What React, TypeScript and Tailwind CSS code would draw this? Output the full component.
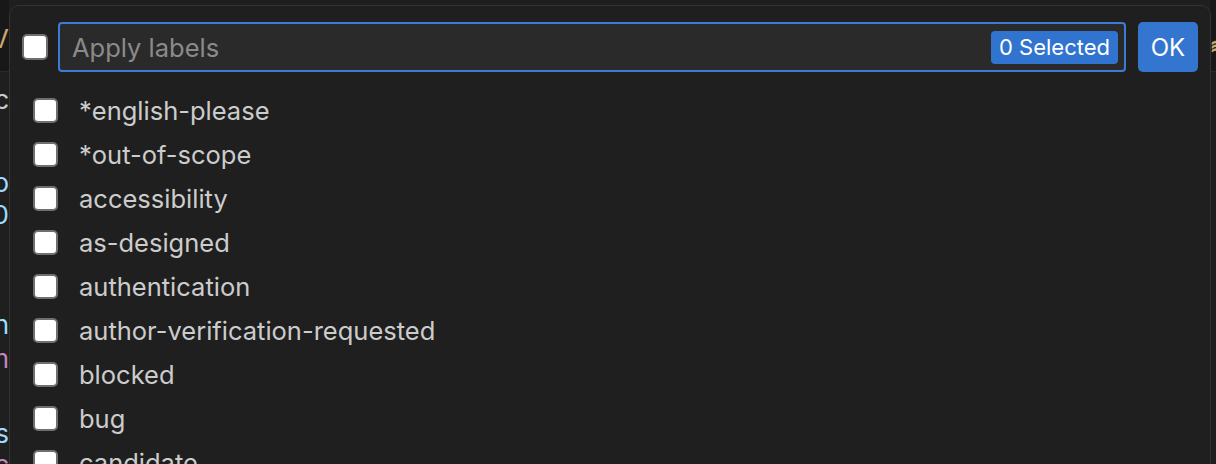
import React from "react";

const labels = [
  "*english-please",
  "*out-of-scope",
  "accessibility",
  "as-designed",
  "authentication",
  "author-verification-requested",
  "blocked",
  "bug",
  "candidate",
];

// bits of the editor peeking out on the left of the picker
const leftBits: { h: string; text: string; color: string }[] = [
  { h: "h-[24px]", text: "", color: "" },
  { h: "h-[30px]", text: "V", color: "text-[#c9a86a]" },
  { h: "h-[28px]", text: "", color: "" },
  { h: "h-[36px]", text: "ic", color: "text-[#cccccc]" },
  { h: "h-[49px]", text: "", color: "" },
  { h: "h-[32px]", text: "o", color: "text-[#9cdcfe]" },
  { h: "h-[32px]", text: "0", color: "text-[#9cdcfe]" },
  { h: "h-[77px]", text: "", color: "" },
  { h: "h-[34px]", text: "n", color: "text-[#9cdcfe]" },
  { h: "h-[34px]", text: "m", color: "text-[#c586c0]" },
  { h: "h-[42px]", text: "", color: "" },
  { h: "h-[32px]", text: "s", color: "text-[#9cdcfe]" },
  { h: "h-[30px]", text: "c", color: "text-[#c586c0]" },
];

function Box({ className = "" }: { className?: string }) {
  return (
    <span
      className={`block shrink-0 rounded-[5px] border-2 border-[#6f6f6f] bg-white ${className}`}
    />
  );
}

export default function App() {
  return (
    <div
      className="relative w-[1216px] h-[464px] overflow-hidden bg-[#1f1f1f]"
      style={{ fontFamily: "Inter, 'Noto Sans', sans-serif" }}
    >
      {/* editor behind */}
      <div className="flex h-full justify-between">
        <div className="w-[9px] flex flex-col overflow-hidden">
          <div className="h-[72px] bg-[#181818] border-b border-[#2b2b2b] shrink-0" />
        </div>
        <div className="w-[6px] flex flex-col">
          <div className="h-[72px] bg-[#181818] border-b border-[#2b2b2b] shrink-0 pt-[34px]">
            <span className="block text-[#c9a86a] text-[20px] leading-[24px] font-bold">≋</span>
          </div>
        </div>
      </div>
      <div className="absolute left-0 top-0 w-[9px] overflow-hidden flex flex-col items-end text-[26px] leading-none">
        {leftBits.map((b, i) => (
          <div key={i} className={`${b.h} flex items-center justify-end ${b.color}`}>
            <span className="whitespace-nowrap">{b.text}</span>
          </div>
        ))}
      </div>

      {/* quick pick */}
      <div className="absolute left-[9px] top-[5px] w-[1202px] h-[480px] rounded-[10px] border border-[#333333] bg-[#1f1f1f]">
        <div className="flex items-center pl-[12px] pr-[12px] pt-[16px]">
          <Box className="w-[26px] h-[26px]" />
          <div className="ml-[10px] flex-1 h-[50px] rounded-[4px] border-2 border-[#3b7dd6] bg-[#2a2a2a] flex items-center pl-[12px] pr-[6px]">
            <span className="flex-1 text-[25.5px] text-[#8a8a8a] pt-[2px]">Apply labels</span>
            <span className="h-[33px] px-[8px] rounded-[4px] bg-[#3074d0] text-white text-[22px] flex items-center">
              0 Selected
            </span>
          </div>
          <button className="ml-[12px] w-[60px] h-[50px] rounded-[5px] bg-[#3476cf] text-white text-[24px] pt-[2px]">
            OK
          </button>
        </div>
        <ul className="mt-[16px] pl-[23px]">
          {labels.map((l) => (
            <li key={l} className="h-[44px] flex items-center">
              <Box className="w-[25px] h-[25px]" />
              <span className="ml-[21px] text-[25.5px] text-[#cccccc] pt-[3px]">{l}</span>
            </li>
          ))}
        </ul>
      </div>
    </div>
  );
}
